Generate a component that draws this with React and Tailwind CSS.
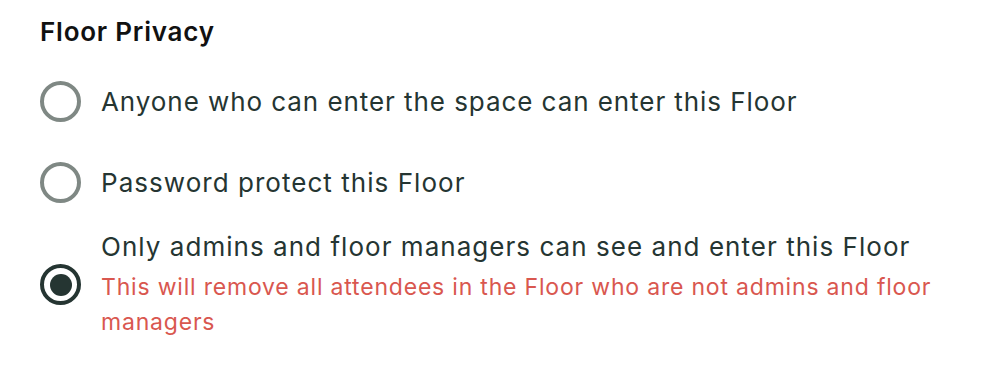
export default function App() {
  const font = { fontFamily: 'Inter, "Noto Sans", sans-serif' };
  return (
    <div className="w-[1006px] h-[372px] bg-white text-[#253532] pl-10 pt-[14px]" style={font}>
      <h2 className="text-[26px] leading-[36px] font-semibold tracking-[0.03em] text-[#111]">Floor Privacy</h2>
      <div className="mt-[31px] flex flex-col gap-[40px]">
        <label className="flex items-center gap-[20px]">
          <span className="w-[41px] h-[41px] rounded-full border-4 border-[#7f8884] shrink-0" />
          <span className="text-[26px] leading-[36px] tracking-[0.036em]">Anyone who can enter the space can enter this Floor</span>
        </label>
        <label className="flex items-center gap-[20px]">
          <span className="w-[41px] h-[41px] rounded-full border-4 border-[#7f8884] shrink-0" />
          <span className="text-[26px] leading-[36px] tracking-[0.04em]">Password protect this Floor</span>
        </label>
        <label className="flex items-center gap-[20px] -mt-[14px]">
          <span className="w-[41px] h-[41px] rounded-full border-4 border-[#253532] shrink-0 flex items-center justify-center">
            <span className="w-[22px] h-[22px] rounded-full bg-[#253532]" />
          </span>
          <span className="flex flex-col w-[850px]">
            <span className="text-[26px] leading-[36px] tracking-[0.04em]">Only admins and floor managers can see and enter this Floor</span>
            <span className="mt-[5px] text-[23px] leading-[35px] tracking-[0.035em] text-[#d9574f]">This will remove all attendees in the Floor who are not admins and floor managers</span>
          </span>
        </label>
      </div>
    </div>
  );
}
